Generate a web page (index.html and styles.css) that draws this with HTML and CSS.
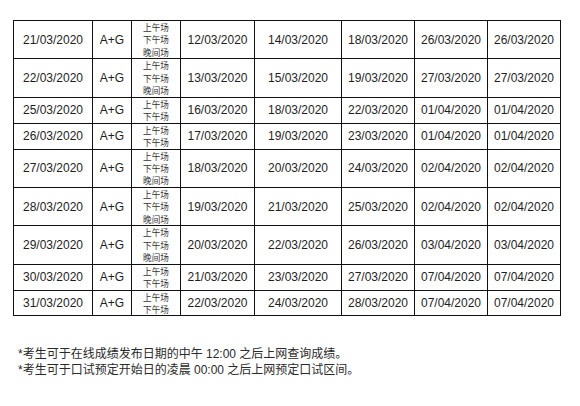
FILE: index.html
```html
<!DOCTYPE html>
<html>
<head>
<meta charset="utf-8">
<link rel="stylesheet" href="styles.css">
</head>
<body>
<table class="sched">
<colgroup>
<col class="c1"><col class="c2"><col class="c3"><col class="c4"><col class="c5"><col class="c6"><col class="c7"><col class="c8">
</colgroup>
<tbody>
<tr><td>21/03/2020</td><td>A+G</td><td class="ses">上午场<br>下午场<br>晚间场</td><td>12/03/2020</td><td>14/03/2020</td><td>18/03/2020</td><td>26/03/2020</td><td>26/03/2020</td></tr>
<tr><td>22/03/2020</td><td>A+G</td><td class="ses">上午场<br>下午场<br>晚间场</td><td>13/03/2020</td><td>15/03/2020</td><td>19/03/2020</td><td>27/03/2020</td><td>27/03/2020</td></tr>
<tr><td>25/03/2020</td><td>A+G</td><td class="ses">上午场<br>下午场</td><td>16/03/2020</td><td>18/03/2020</td><td>22/03/2020</td><td>01/04/2020</td><td>01/04/2020</td></tr>
<tr><td>26/03/2020</td><td>A+G</td><td class="ses">上午场<br>下午场</td><td>17/03/2020</td><td>19/03/2020</td><td>23/03/2020</td><td>01/04/2020</td><td>01/04/2020</td></tr>
<tr><td>27/03/2020</td><td>A+G</td><td class="ses">上午场<br>下午场<br>晚间场</td><td>18/03/2020</td><td>20/03/2020</td><td>24/03/2020</td><td>02/04/2020</td><td>02/04/2020</td></tr>
<tr><td>28/03/2020</td><td>A+G</td><td class="ses">上午场<br>下午场<br>晚间场</td><td>19/03/2020</td><td>21/03/2020</td><td>25/03/2020</td><td>02/04/2020</td><td>02/04/2020</td></tr>
<tr><td>29/03/2020</td><td>A+G</td><td class="ses">上午场<br>下午场<br>晚间场</td><td>20/03/2020</td><td>22/03/2020</td><td>26/03/2020</td><td>03/04/2020</td><td>03/04/2020</td></tr>
<tr><td>30/03/2020</td><td>A+G</td><td class="ses">上午场<br>下午场</td><td>21/03/2020</td><td>23/03/2020</td><td>27/03/2020</td><td>07/04/2020</td><td>07/04/2020</td></tr>
<tr><td>31/03/2020</td><td>A+G</td><td class="ses">上午场<br>下午场</td><td>22/03/2020</td><td>24/03/2020</td><td>28/03/2020</td><td>07/04/2020</td><td>07/04/2020</td></tr>
</tbody>
</table>
<div class="notes">
<p>*考生可于在线成绩发布日期的中午 12:00 之后上网查询成绩。</p>
<p>*考生可于口试预定开始日的凌晨 00:00 之后上网预定口试区间。</p>
</div>
</body>
</html>
```
FILE: styles.css
```css
html, body {
  margin: 0;
  padding: 0;
  background: #ffffff;
}
body {
  padding: 20px 0 0 13px;
  font-family: "Liberation Sans", "Noto Sans CJK SC", sans-serif;
  color: #1e1e1e;
}
.sched {
  border-collapse: collapse;
  table-layout: fixed;
  width: 548px;
}
.c1 { width: 79px; }
.c2 { width: 39px; }
.c3 { width: 49px; }
.c4 { width: 74px; }
.c5 { width: 87px; }
.c6 { width: 73px; }
.c7 { width: 73px; }
.c8 { width: 73px; }
.sched td {
  border: 1px solid #111;
  padding: 0;
  text-align: center;
  vertical-align: middle;
  font-size: 12px;
  line-height: 14px;
  white-space: nowrap;
}
.sched td.ses {
  font-family: "Noto Sans CJK SC", sans-serif;
  font-size: 8.6px;
  line-height: 12.45px;
  color: #333;
}
.notes {
  margin-top: 30px;
  padding-left: 5px;
  font-family: "Liberation Sans", "Noto Sans CJK SC", sans-serif;
  font-size: 12px;
  line-height: 16px;
  color: #2a2a2a;
}
.notes p {
  margin: 0;
}
```
